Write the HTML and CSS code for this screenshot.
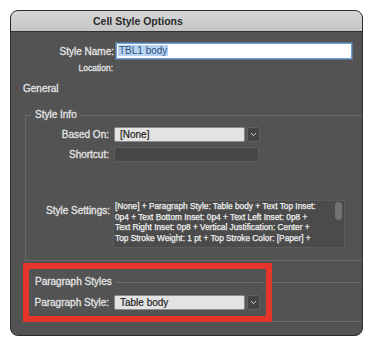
FILE: index.html
```html
<!DOCTYPE html>
<html lang="en">
<head>
  <meta charset="UTF-8">
  <meta name="viewport" content="width=device-width, initial-scale=1.0">
  <title>Cell Style Options</title>
  <link rel="stylesheet" href="styles.css">
</head>
<body>
  <div class="page">
    <div class="window">
      <div class="titlebar">Cell Style Options</div>

      <div class="content">
        <div class="row name-row">
          <span class="label name-label">Style Name:</span>
          <div class="name-input"><span class="selected">TBL1 body</span></div>
        </div>
        <div class="location">Location:</div>

        <div class="section-title">General</div>

        <fieldset class="group">
          <legend>Style Info</legend>
          <div class="row based-row">
            <span class="label">Based On:</span>
            <div class="dropdown">[None]</div>
            <span class="dropdown-btn">
              <svg width="7" height="5" viewBox="0 0 7 5"><path d="M1 1.2 L3.5 3.6 L6 1.2" fill="none" stroke="#d8d8d8" stroke-width="1"/></svg>
            </span>
          </div>
          <div class="row shortcut-row">
            <span class="label">Shortcut:</span>
            <div class="shortcut-field"></div>
          </div>
          <div class="row settings-row">
            <span class="label settings-label">Style Settings:</span>
            <div class="settings-box">
              <div class="settings-text">
                [None] + Paragraph Style: Table body + Text Top Inset:<br>
                0p4 + Text Bottom Inset: 0p4 + Text Left Inset: 0p8 +<br>
                Text Right Inset: 0p8 + Vertical Justification: Center +<br>
                Top Stroke Weight: 1 pt + Top Stroke Color: [Paper] +
              </div>
              <div class="scrollbar"><div class="thumb"></div></div>
            </div>
          </div>
        </fieldset>

        <div class="highlight">
          <fieldset class="group para-group">
            <legend>Paragraph Styles</legend>
            <div class="row para-row">
              <span class="label">Paragraph Style:</span>
              <div class="dropdown">Table body</div>
              <span class="dropdown-btn">
                <svg width="7" height="5" viewBox="0 0 7 5"><path d="M1 1.2 L3.5 3.6 L6 1.2" fill="none" stroke="#d8d8d8" stroke-width="1"/></svg>
              </span>
            </div>
          </fieldset>
          <div class="highlight-frame"></div>
        </div>
      </div>
    </div>
  </div>
</body>
</html>
```

FILE: styles.css
```css
body {
  margin: 0;
  background: #ffffff;
  font-family: "Liberation Sans", Arial, sans-serif;
}
.page {
  padding: 10px 0 0 10px;
}
.window {
  position: relative;
  width: 353px;
  height: 326px;
  box-sizing: border-box;
  border: 1px solid #2c2c2c;
  border-radius: 8px;
  overflow: hidden;
  background: #535353;
  color: #e4e4e4;
  -webkit-text-stroke: 0.3px currentColor;
}
.titlebar {
  height: 20px;
  line-height: 20px;
  padding-left: 82px;
  background: linear-gradient(#d7d7d7, #c5c5c5);
  border-bottom: 1px solid #303030;
  font-size: 10.5px;
  font-weight: bold;
  color: #2b2b2b;
  -webkit-text-stroke: 0;
}
.row {
  display: flex;
  align-items: center;
}
.label {
  font-size: 10px;
  text-align: right;
  flex-shrink: 0;
}
.name-row {
  margin-top: 11px;
}
.name-label {
  width: 103px;
  margin-right: 2px;
}
.name-input {
  width: 236px;
  height: 16px;
  box-sizing: border-box;
  background: #ffffff;
  border: 1px solid #6fa0da;
  box-shadow: 0 0 0 1px rgba(110, 160, 218, 0.45);
  font-size: 10px;
  line-height: 14px;
  padding-left: 1px;
  -webkit-text-stroke: 0;
}
.selected {
  background: #b6d3f2;
  color: #2d4f78;
  padding: 0 1px;
}
.location {
  width: 102px;
  margin-top: 4px;
  text-align: right;
  font-size: 8.5px;
  line-height: 10px;
}
.section-title {
  margin-top: 10px;
  padding-left: 12px;
  font-size: 10px;
  line-height: 12px;
}
.group {
  margin: 14px 0 0 14px;
  padding: 0 0 12px 0;
  border: 1px solid #6a6a6a;
  border-right: none;
  min-width: 0;
}
.group legend {
  margin-left: 5px;
  padding: 0 4px;
  font-size: 10px;
  line-height: 12px;
}
.group .label {
  width: 83px;
  margin-right: 5px;
}
.based-row {
  margin-top: 6px;
}
.dropdown {
  width: 131px;
  height: 15px;
  box-sizing: border-box;
  padding-left: 5px;
  background: #e3e3e3;
  border: 1px solid #8c8c8c;
  border-radius: 2px;
  color: #1e1e1e;
  font-size: 10px;
  line-height: 13px;
  -webkit-text-stroke: 0.2px currentColor;
}
.dropdown-btn {
  display: flex;
  align-items: center;
  justify-content: center;
  width: 13px;
  height: 15px;
  margin-left: 2px;
  box-sizing: border-box;
  background: #444444;
  border: 1px solid #626262;
  border-radius: 2px;
}
.shortcut-row {
  margin-top: 5px;
}
.shortcut-field {
  width: 145px;
  height: 15px;
  box-sizing: border-box;
  background: #474747;
  border: 1px solid #5f5f5f;
  border-radius: 2px;
}
.settings-row {
  margin-top: 38px;
  align-items: flex-start;
}
.group .settings-label {
  width: 84px;
  margin-right: 3px;
  padding-top: 5px;
  line-height: 12px;
}
.settings-box {
  display: flex;
  width: 232px;
  height: 48px;
  box-sizing: border-box;
  background: #4b4b4b;
  border: 1px solid #5b5b5b;
}
.settings-text {
  flex: 1;
  padding: 0 0 0 1px;
  font-size: 8.3px;
  line-height: 10.7px;
  white-space: nowrap;
  overflow: hidden;
  color: #f0f0f0;
  -webkit-text-stroke: 0.25px currentColor;
}
.scrollbar {
  width: 12px;
  padding: 1px 2px 0 3px;
  box-sizing: border-box;
}
.thumb {
  height: 18px;
  border-radius: 4px;
  background: #727272;
}
.highlight {
  position: relative;
  margin-top: 15px;
}
.para-group {
  padding-bottom: 11px;
}
.para-row {
  margin-top: 7px;
}
.highlight-frame {
  position: absolute;
  left: 12px;
  top: -13px;
  width: 249px;
  height: 59px;
  box-sizing: border-box;
  border: 6px solid #e5342a;
}
```
